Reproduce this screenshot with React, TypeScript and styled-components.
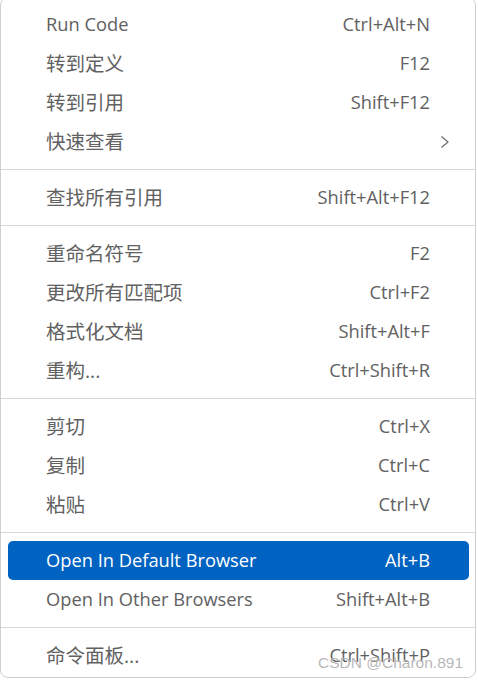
import React from "react";
import styled, { createGlobalStyle } from "styled-components";

const GlobalStyle = createGlobalStyle`
  html, body { margin: 0; padding: 0; background: #ffffff; }
  body { overflow: hidden; }
`;

const Page = styled.div`
  position: relative;
  width: 478px;
  height: 680px;
  overflow: hidden;
`;

const Menu = styled.div`
  box-sizing: border-box;
  width: 476px;
  margin-top: -3px;
  padding: 7px 0 2px;
  background: #ffffff;
  border: 1px solid #cfcfcf;
  border-radius: 8px;
  font-family: "Open Sans", "Noto Sans CJK SC", sans-serif;
  font-size: 18.3px;
  color: #616161;
`;

const Item = styled.div<{ $active?: boolean }>`
  display: flex;
  align-items: center;
  justify-content: space-between;
  height: 39px;
  margin: 0 6px 0 7px;
  padding: 0 39px 0 38px;
  border-radius: 5px;
  background: ${(p) => (p.$active ? "#0062c1" : "transparent")};
  color: ${(p) => (p.$active ? "#ffffff" : "#616161")};
  position: relative;
  white-space: nowrap;
`;

const Label = styled.span<{ $cjk?: boolean }>`
  line-height: 1;
  font-size: ${(p) => (p.$cjk ? "19.5px" : "inherit")};
`;

const Shortcut = styled.span`
  line-height: 1;
`;

const Chevron = styled.svg`
  position: absolute;
  right: 19px;
  top: 50%;
  transform: translateY(-50%);
`;

const Separator = styled.div`
  height: 1px;
  margin: 8px 0;
  background: #d6d6d6;
`;

const Watermark = styled.div`
  position: absolute;
  right: 15px;
  bottom: 8px;
  font-family: "Liberation Sans", Arial, sans-serif;
  font-size: 15.5px;
  color: rgba(120, 120, 120, 0.55);
  text-shadow: 0 0 1px #fff;
  pointer-events: none;
`;

type Entry =
  | { type: "item"; label: string; shortcut?: string; submenu?: boolean; active?: boolean }
  | { type: "sep" };

const entries: Entry[] = [
  { type: "item", label: "Run Code", shortcut: "Ctrl+Alt+N" },
  { type: "item", label: "转到定义", shortcut: "F12" },
  { type: "item", label: "转到引用", shortcut: "Shift+F12" },
  { type: "item", label: "快速查看", submenu: true },
  { type: "sep" },
  { type: "item", label: "查找所有引用", shortcut: "Shift+Alt+F12" },
  { type: "sep" },
  { type: "item", label: "重命名符号", shortcut: "F2" },
  { type: "item", label: "更改所有匹配项", shortcut: "Ctrl+F2" },
  { type: "item", label: "格式化文档", shortcut: "Shift+Alt+F" },
  { type: "item", label: "重构...", shortcut: "Ctrl+Shift+R" },
  { type: "sep" },
  { type: "item", label: "剪切", shortcut: "Ctrl+X" },
  { type: "item", label: "复制", shortcut: "Ctrl+C" },
  { type: "item", label: "粘贴", shortcut: "Ctrl+V" },
  { type: "sep" },
  { type: "item", label: "Open In Default Browser", shortcut: "Alt+B", active: true },
  { type: "item", label: "Open In Other Browsers", shortcut: "Shift+Alt+B" },
  { type: "sep" },
  { type: "item", label: "命令面板...", shortcut: "Ctrl+Shift+P" },
];

const isCjk = (s: string) => /[\u4e00-\u9fff]/.test(s);

export default function App() {
  return (
    <Page>
      <GlobalStyle />
      <Menu>
        {entries.map((e, i) =>
          e.type === "sep" ? (
            <Separator key={i} />
          ) : (
            <Item key={i} $active={e.active}>
              <Label $cjk={isCjk(e.label)}>{e.label}</Label>
              {e.shortcut && <Shortcut>{e.shortcut}</Shortcut>}
              {e.submenu && (
                <Chevron width="10" height="13" viewBox="0 0 10 13">
                  <path d="M1.5 1 L8 6.5 L1.5 12" fill="none" stroke="#6a6a6a" strokeWidth="1.2" />
                </Chevron>
              )}
            </Item>
          )
        )}
      </Menu>
      <Watermark>CSDN @Charon.891</Watermark>
    </Page>
  );
}
